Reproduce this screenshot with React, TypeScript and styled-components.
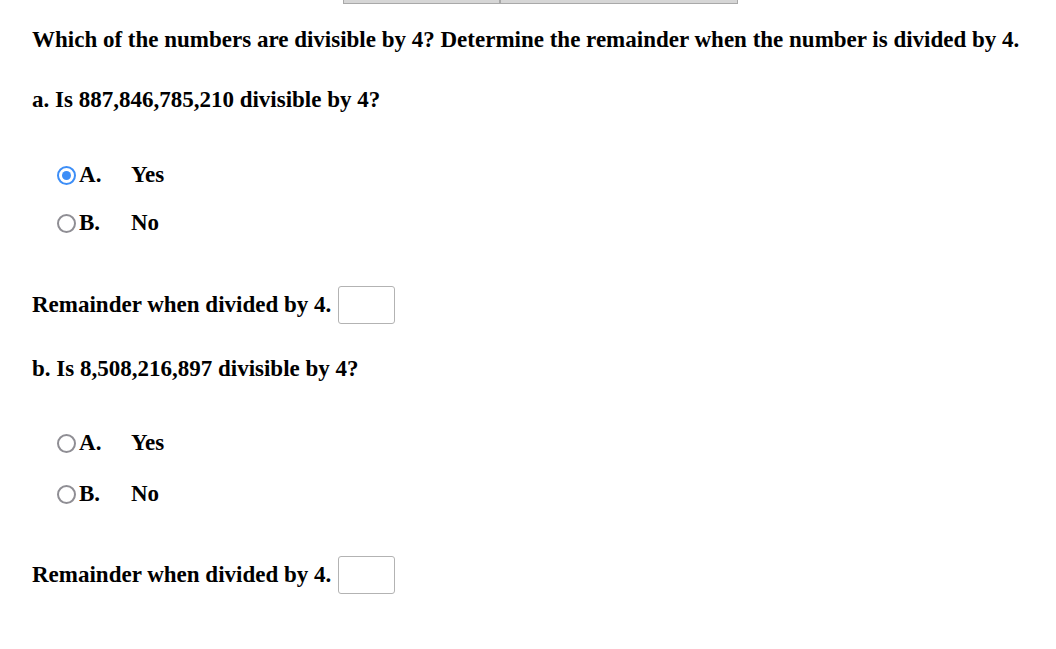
import React, { useState } from 'react'
import styled, { createGlobalStyle } from 'styled-components'

const GlobalStyle = createGlobalStyle`
    html, body {
        margin: 0;
        padding: 0;
        background: #ffffff;
    }
    body {
        font-family: "Liberation Serif", "Times New Roman", serif;
        color: #000000;
    }
`

const Page = styled.div`
    width: 1056px;
    min-height: 649px;
    display: flex;
    flex-direction: column;
`

const TabStrip = styled.div`
    display: flex;
    margin-left: 343px;
    height: 4px;
`

const Tab = styled.div<{ $w: number }>`
    width: ${({ $w }) => $w}px;
    height: 3px;
    background: #d6d6d6;
    border: 1px solid #a9a9a9;
    border-top: none;
    box-sizing: content-box;
`

const Content = styled.div`
    display: flex;
    flex-direction: column;
    padding-left: 32px;
`

const Line = styled.div<{ $top: number }>`
    margin-top: ${({ $top }) => $top}px;
    font-size: 23px;
    font-weight: bold;
    line-height: 24px;
    white-space: nowrap;
`

const OptionList = styled.div<{ $top: number; $gap: number }>`
    margin-top: ${({ $top }) => $top}px;
    display: flex;
    flex-direction: column;
    gap: ${({ $gap }) => $gap}px;
    padding-left: 24px;
`

const OptionRow = styled.label`
    display: flex;
    align-items: center;
    height: 24px;
    font-size: 23px;
    font-weight: bold;
    cursor: pointer;
`

const Radio = styled.span<{ $checked: boolean }>`
    width: 19px;
    height: 19px;
    box-sizing: border-box;
    border-radius: 50%;
    border: ${({ $checked }) => ($checked ? '2px solid #3d8ef7' : '2.5px solid #8f8e94')};
    display: flex;
    align-items: center;
    justify-content: center;
    margin-left: 1px;
    margin-right: 3px;
    background: #fff;

    &::after {
        content: '';
        width: 9px;
        height: 9px;
        border-radius: 50%;
        background: #3d8ef7;
        display: ${({ $checked }) => ($checked ? 'block' : 'none')};
    }
`

const Letter = styled.span`
    width: 52px;
`

const AnswerRow = styled.div<{ $top: number }>`
    margin-top: ${({ $top }) => $top}px;
    display: flex;
    align-items: center;
    height: 38px;
    font-size: 23px;
    font-weight: bold;
    white-space: nowrap;
`

const AnswerBox = styled.input`
    width: 57px;
    height: 38px;
    box-sizing: border-box;
    margin-left: 7px;
    border: 1px solid #b3b3b3;
    border-radius: 3px;
    background: #fff;
    outline: none;
    font-family: inherit;
    font-size: 18px;
    padding: 0 6px;
`

type Part = {
    label: string
    number: string
    choice: 'A' | 'B' | null
    top: number
    gap: number
    space: number
}

const Question = ({ part }: { part: Part }) => {
    const [choice, setChoice] = useState(part.choice)
    const options: { key: 'A' | 'B'; text: string }[] = [
        { key: 'A', text: 'Yes' },
        { key: 'B', text: 'No' },
    ]
    return (
        <>
            <Line $top={part.top}>{part.label}. Is {part.number} divisible by 4?</Line>
            <OptionList $top={part.space} $gap={part.gap}>
                {options.map((o) => (
                    <OptionRow key={o.key} onClick={() => setChoice(o.key)}>
                        <Radio $checked={choice === o.key} />
                        <Letter>{o.key}.</Letter>
                        <span>{o.text}</span>
                    </OptionRow>
                ))}
            </OptionList>
            <AnswerRow $top={part.space}>
                Remainder when divided by 4.
                <AnswerBox type="text" />
            </AnswerRow>
        </>
    )
}

const parts: Part[] = [
    { label: 'a', number: '887,846,785,210', choice: 'A', top: 36, gap: 24, space: 51 },
    { label: 'b', number: '8,508,216,897', choice: null, top: 33, gap: 27, space: 50 },
]

const App = () => {
    return (
        <Page>
            <GlobalStyle />
            <TabStrip>
                <Tab $w={155} />
                <Tab $w={236} />
            </TabStrip>
            <Content>
                <Line $top={24}>
                    Which of the numbers are divisible by 4? Determine the remainder when the number is divided by 4.
                </Line>
                {parts.map((p) => (
                    <Question key={p.label} part={p} />
                ))}
            </Content>
        </Page>
    )
}

export default App
